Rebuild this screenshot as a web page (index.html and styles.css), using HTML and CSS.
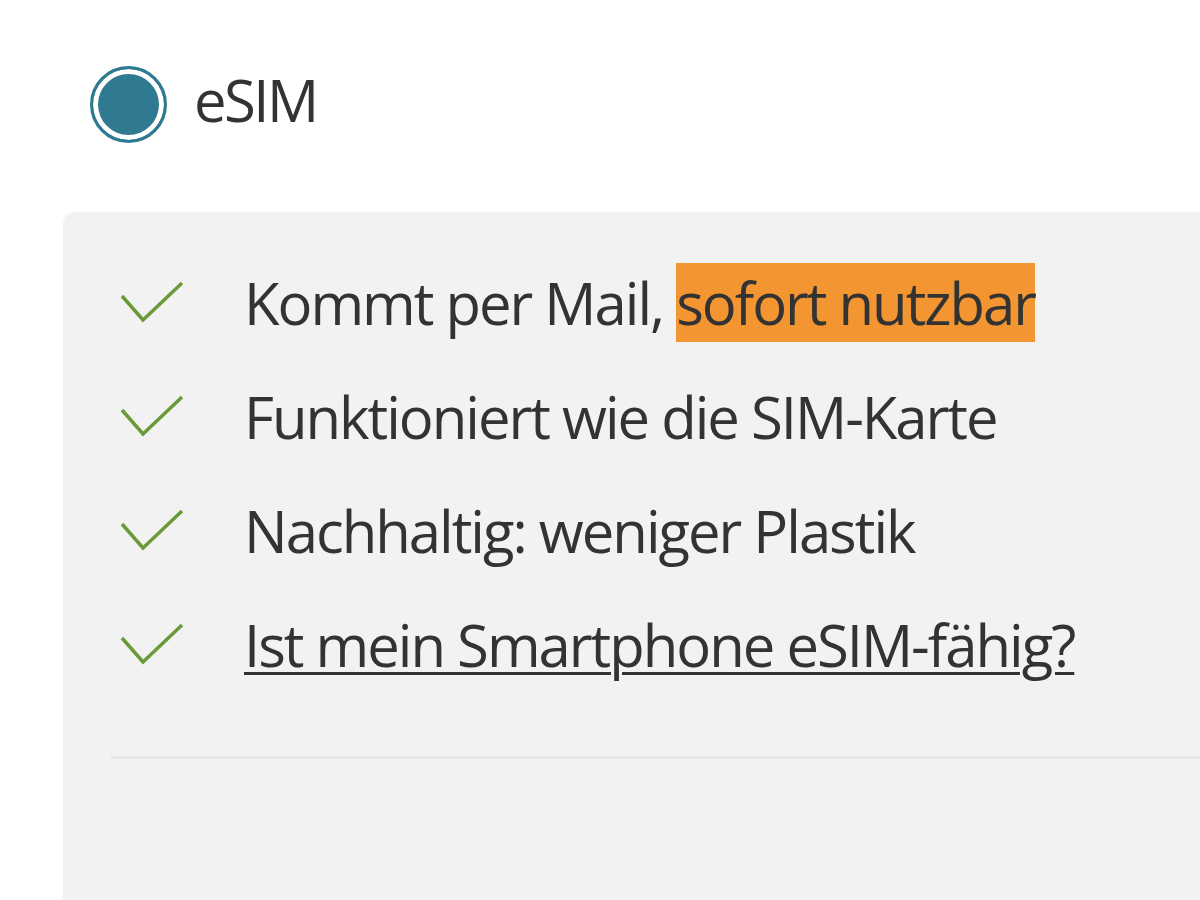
FILE: index.html
```html
<!DOCTYPE html>
<html lang="de">
<head>
    <meta charset="UTF-8">
    <meta name="viewport" content="width=device-width, initial-scale=1.0">
    <title>eSIM</title>
    <link rel="stylesheet" href="styles.css">
</head>
<body>
    <div class="option">
        <span class="option-radio"></span>
        <span class="option-label">eSIM</span>
    </div>

    <div class="option-panel">
        <ul class="benefits">
            <li class="benefit">
                <svg class="benefit-check" viewBox="0 0 64 44"><path d="M2 16 L23 40 L62 3"/></svg>
                <span>Kommt per Mail, <mark class="benefit-mark">sofort nutzbar</mark></span>
            </li>
            <li class="benefit">
                <svg class="benefit-check" viewBox="0 0 64 44"><path d="M2 16 L23 40 L62 3"/></svg>
                <span>Funktioniert wie die SIM-Karte</span>
            </li>
            <li class="benefit">
                <svg class="benefit-check" viewBox="0 0 64 44"><path d="M2 16 L23 40 L62 3"/></svg>
                <span>Nachhaltig: weniger Plastik</span>
            </li>
            <li class="benefit">
                <svg class="benefit-check" viewBox="0 0 64 44"><path d="M2 16 L23 40 L62 3"/></svg>
                <a class="benefit-link" href="#">Ist mein Smartphone eSIM-fähig?</a>
            </li>
        </ul>
        <div class="option-divider"></div>
    </div>
</body>
</html>
```

FILE: styles.css
```css
/* Grundlayout */
body {
    margin: 0;
    background-color: #fff;
    font-family: "Open Sans", "Liberation Sans", sans-serif;
    color: #333;
    overflow: hidden;
}

/* Auswahl eSIM */
.option {
    display: flex;
    align-items: center;
    gap: 27px;
    padding: 66px 0 0 90px;
}

.option-radio {
    width: 71px;
    height: 71px;
    border: 3px solid #307a91;
    border-radius: 50%;
    background-color: #307a91;
    box-shadow: inset 0 0 0 5px #fff;
}

.option-label {
    padding-bottom: 10px;
    font-size: 58px;
    letter-spacing: -2.5px;
    line-height: 1;
}

/* Graue Box */
.option-panel {
    margin: 69px 0 0 63px;
    padding-top: 33px;
    height: 700px;
    background-color: #f2f2f2;
    border-top-left-radius: 12px;
}

.benefits {
    list-style: none;
    margin: 0;
    padding: 0 0 0 57px;
}

.benefit {
    display: grid;
    grid-template-columns: 124px 1fr;
    align-items: center;
    height: 114px;
    font-size: 58px;
    letter-spacing: -2px;
}

.benefit-check {
    width: 64px;
    height: 44px;
    fill: none;
    stroke: #6a9a3a;
    stroke-width: 3.5;
}

.benefit-mark {
    background-color: #f39530;
    color: #333;
}

.benefit-link {
    color: #333;
    text-decoration: underline;
    text-decoration-thickness: 3px;
    text-underline-offset: 5px;
}

.option-divider {
    height: 3px;
    margin: 55px 0 0 48px;
    background-color: #e5e5e5;
}
```
